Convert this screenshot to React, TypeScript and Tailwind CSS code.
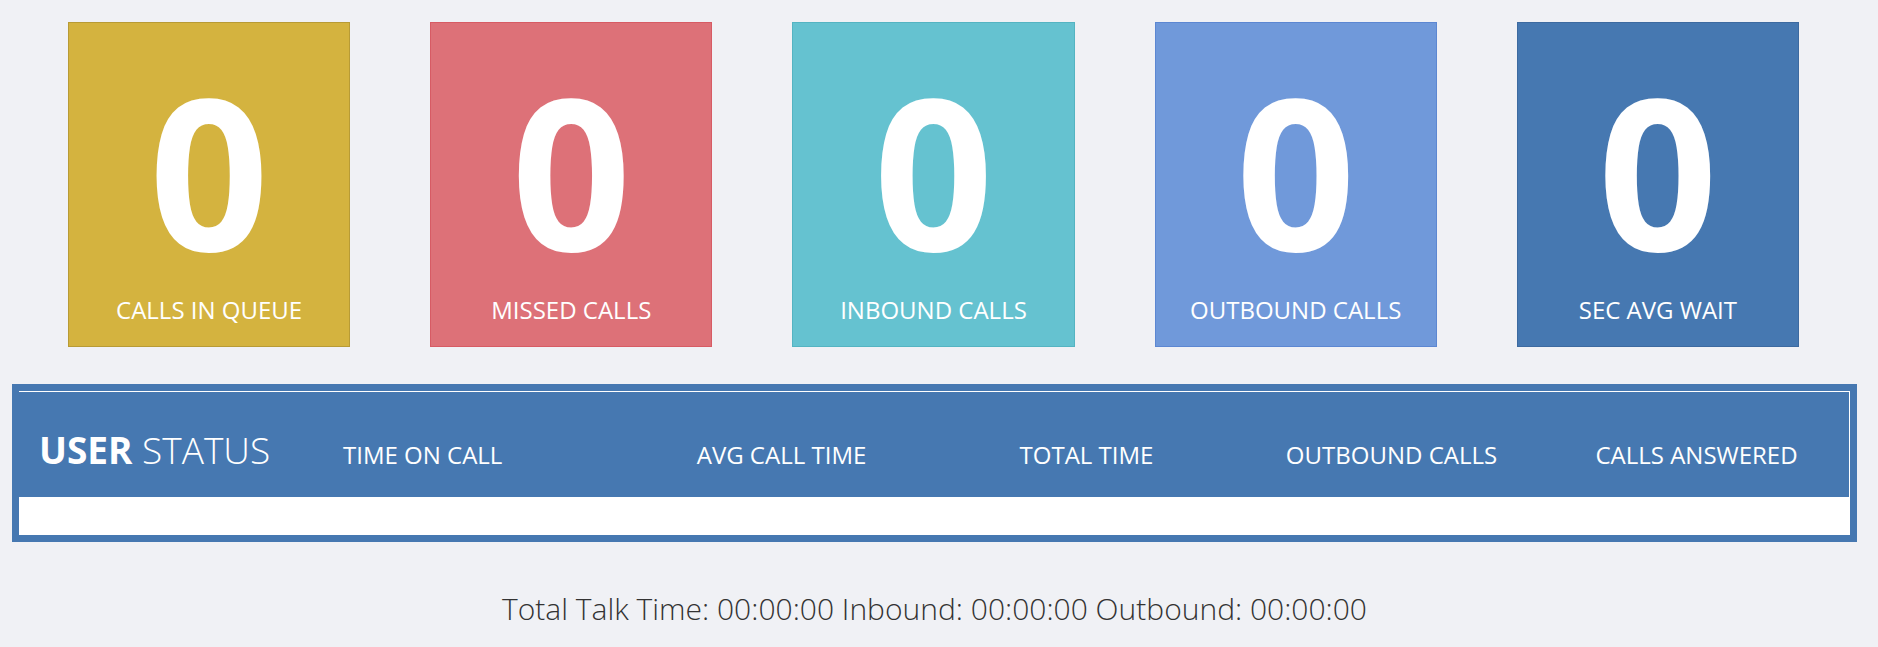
interface Tile {
  label: string;
  value: number;
  color: string;
}

const TILES: Tile[] = [
  { label: 'Calls in queue', value: 0, color: 'border-[#b89b35] bg-[#d4b33f]' },
  { label: 'Missed calls',   value: 0, color: 'border-[#d75b64] bg-[#dd7178]' },
  { label: 'Inbound calls',  value: 0, color: 'border-[#54b4c2] bg-[#65c2d0]' },
  { label: 'Outbound calls', value: 0, color: 'border-[#5c87d2] bg-[#7099da]' },
  { label: 'Sec avg wait',   value: 0, color: 'border-[#3d6aa0] bg-[#4678b1]' },
];

const COLUMNS = ['Avg call time', 'Total time', 'Outbound calls', 'Calls answered'];

const TOTALS = { talk: 0, inbound: 0, outbound: 0 };

function hms(seconds: number): string {
  return [Math.floor(seconds / 3600), Math.floor(seconds / 60) % 60, seconds % 60]
    .map((n) => String(n).padStart(2, '0'))
    .join(':');
}

export default function App() {
  return (
    <main className="min-h-screen bg-[#f0f1f5] pt-[22px] pr-[21px] pl-3 font-['Open_Sans',sans-serif]">
      <section className="grid grid-cols-5 gap-20 pr-[58px] pl-14">
        {TILES.map(({ label, value, color }) => (
          <div
            key={label}
            className={`flex flex-col items-center border pt-[42px] pb-5 text-white ${color}`}
          >
            <span className="text-[210px] leading-none font-bold">{value}</span>
            <span className="mt-[19px] text-2xl leading-8 whitespace-nowrap uppercase">{label}</span>
          </div>
        ))}
      </section>

      <section className="mt-[37px] border-7 border-[#4678b1] bg-white pt-px pr-px pb-[38px]">
        <table className="w-full table-fixed border-collapse bg-[#4678b1] text-white uppercase">
          <thead>
            <tr className="h-[105px] align-baseline text-2xl whitespace-nowrap">
              <th className="pt-8 pl-5 text-left text-[37px] leading-[52px] font-light">
                <b className="font-bold">User</b> Status
              </th>
              <th className="pl-[19px] text-left font-normal">Time on call</th>
              {COLUMNS.map((name) => (
                <th key={name} className="text-center font-normal">
                  {name}
                </th>
              ))}
            </tr>
          </thead>
        </table>
      </section>

      <p className="mt-[46px] text-center text-[30px] leading-[42px] font-light text-[#333333]">
        Total Talk Time: {hms(TOTALS.talk)} Inbound: {hms(TOTALS.inbound)} Outbound:{' '}
        {hms(TOTALS.outbound)}
      </p>
    </main>
  );
}
